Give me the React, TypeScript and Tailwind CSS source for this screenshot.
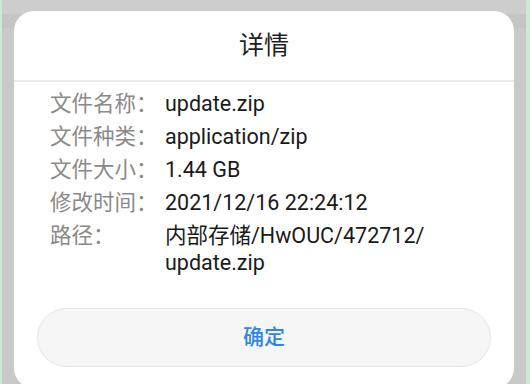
import React from 'react';

const rows: { label: string; value: React.ReactNode }[] = [
  { label: '文件名称：', value: 'update.zip' },
  { label: '文件种类：', value: 'application/zip' },
  { label: '文件大小：', value: '1.44 GB' },
  { label: '修改时间：', value: '2021/12/16 22:24:12' },
  {
    label: '路径：',
    value: (
      <>
        内部存储/HwOUC/472712/
        <br />
        update.zip
      </>
    ),
  },
];

const App: React.FC = () => {
  return (
    <div className="flex h-[384px] w-[530px] overflow-hidden bg-[#cde9cf] font-['Roboto','Noto_Sans_CJK_SC',sans-serif]">
      <div className="ml-[2px] mr-[4px] flex-1 bg-[linear-gradient(to_bottom,#cdcdcd_0,#cdcdcd_14px,#c5c5c5_14px,#c5c5c5_28px,#c9c9c9_28px)] px-[12px] pt-[11px]">
        <div className="h-[377px] rounded-[20px] bg-white">
          <div className="flex h-[69px] items-center justify-center text-[25px] text-[#1f1f1f]">
            详情
          </div>
          <div className="h-[2px] bg-[#ebebeb]" />

          <div className="flex flex-col gap-[6px] pl-[36px] pt-[8px]">
            {rows.map((row) => (
              <div key={row.label} className="flex text-[21.5px] leading-[27px]">
                <span className="w-[115px] shrink-0 text-[#8a8a8a]">{row.label}</span>
                <span className="text-[#1a1a1a]">{row.value}</span>
              </div>
            ))}
          </div>

          <button className="mx-[23px] mt-[32px] flex h-[59px] w-[454px] items-center justify-center rounded-full border border-[#e6e6e6] bg-[#f6f6f6] text-[21px] font-medium text-[#2b87e8]">
            确定
          </button>
        </div>
      </div>
    </div>
  );
};

export default App;
